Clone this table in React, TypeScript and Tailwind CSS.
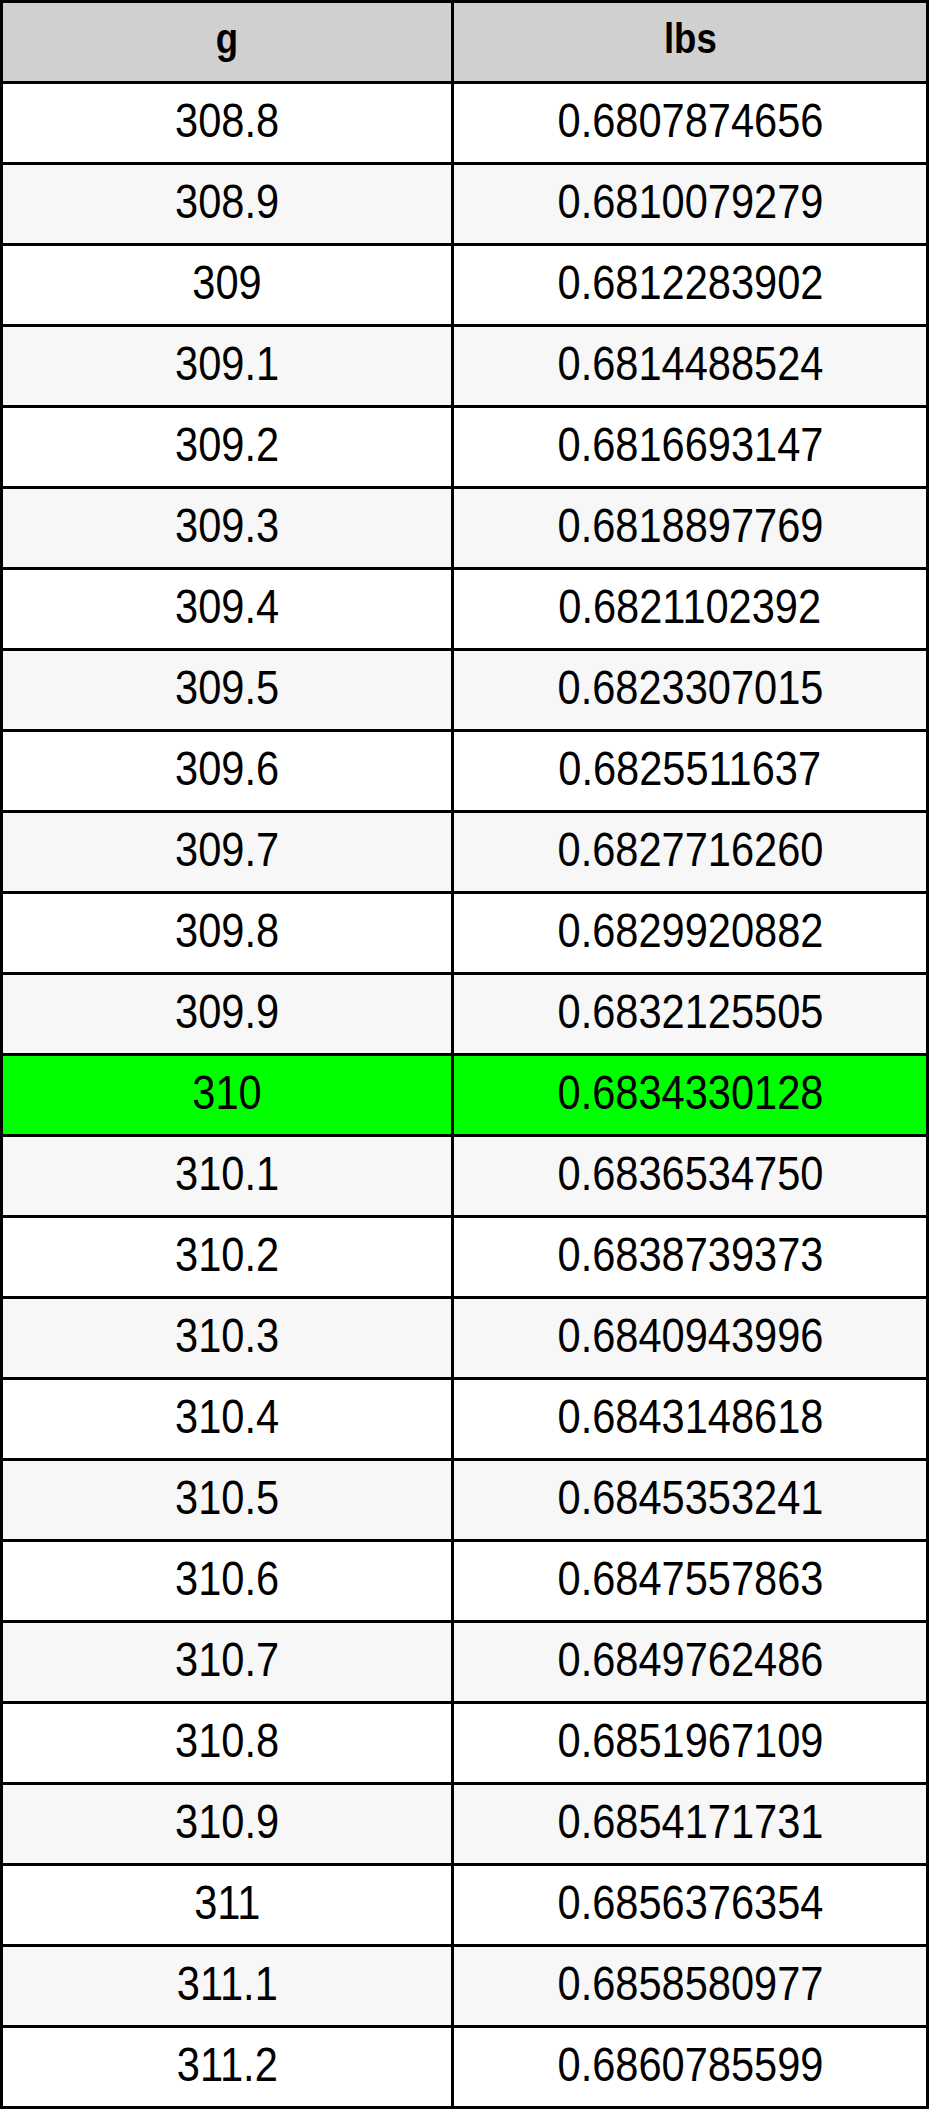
const rows: [string, string][] = [
  ['308.8', '0.6807874656'],
  ['308.9', '0.6810079279'],
  ['309', '0.6812283902'],
  ['309.1', '0.6814488524'],
  ['309.2', '0.6816693147'],
  ['309.3', '0.6818897769'],
  ['309.4', '0.6821102392'],
  ['309.5', '0.6823307015'],
  ['309.6', '0.6825511637'],
  ['309.7', '0.6827716260'],
  ['309.8', '0.6829920882'],
  ['309.9', '0.6832125505'],
  ['310', '0.6834330128'],
  ['310.1', '0.6836534750'],
  ['310.2', '0.6838739373'],
  ['310.3', '0.6840943996'],
  ['310.4', '0.6843148618'],
  ['310.5', '0.6845353241'],
  ['310.6', '0.6847557863'],
  ['310.7', '0.6849762486'],
  ['310.8', '0.6851967109'],
  ['310.9', '0.6854171731'],
  ['311', '0.6856376354'],
  ['311.1', '0.6858580977'],
  ['311.2', '0.6860785599'],
]

export default function App() {
  return (
    <div className="bg-white min-h-[2115px] font-['Liberation_Sans',Arial,sans-serif] text-black">
      <div className="w-[929px] border-[3px] border-black">
        <div className="flex h-[78px] bg-[#d0d0d0] text-[42px] font-bold leading-none">
          <div className="w-[451px] border-r-[3px] border-black flex items-center justify-center">
            <span className="inline-block scale-x-[0.87] -mt-[6px]">g</span>
          </div>
          <div className="flex-1 flex items-center justify-center">
            <span className="inline-block scale-x-[0.87] -mt-[6px]">lbs</span>
          </div>
        </div>
        {rows.map(([g, lbs], i) => {
          const bg = g === '310' ? 'bg-[#00ff00]' : i % 2 === 1 ? 'bg-[#f7f7f7]' : 'bg-white'
          return (
            <div key={g} className={`flex h-[81px] border-t-[3px] border-black text-[48px] leading-none ${bg}`}>
              <div className="w-[451px] border-r-[3px] border-black flex items-center justify-center">
                <span className="inline-block scale-x-[0.866] -mt-[4px]">{g}</span>
              </div>
              <div className="flex-1 flex items-center justify-center">
                <span className="inline-block scale-x-[0.866] -mt-[4px]">{lbs}</span>
              </div>
            </div>
          )
        })}
      </div>
    </div>
  )
}
